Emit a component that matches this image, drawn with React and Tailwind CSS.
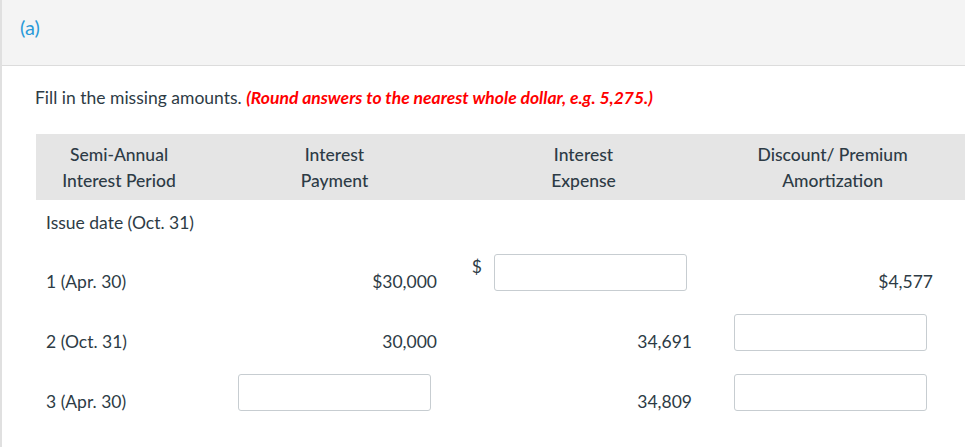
import React from "react";

const Inp = ({ cls = "" }) => (
  <div className={"h-[37px] w-[193px] rounded-[3px] border border-[#c7cdd1] bg-white " + cls} />
);

export default function App() {
  const font = { fontFamily: "Lato, 'Noto Sans', sans-serif" };
  return (
    <div className="w-[965px] h-[447px] bg-white border-l-2 border-[#e0e0e0] text-[#2d3b45]" style={font}>
      <div className="h-[66px] bg-[#f4f4f4] border-b border-[#dcdcdc] pl-[18px] pt-[13px]">
        <span className="text-[20px] font-normal text-[#2a9ad9] leading-[28px]">(a)</span>
      </div>
      <div className="pl-[33px] pt-[21px] text-[17.5px] leading-[22px]">
        Fill in the missing amounts.{" "}
        <span className="text-[#ff0000] font-bold italic">(Round answers to the nearest whole dollar, e.g. 5,275.)</span>
      </div>
      <div className="ml-[34px] mt-[25px]">
        <div className="flex bg-[#e5e5e5] h-[66px] pt-[8px] text-[17.5px] leading-[26px] font-medium text-center">
          <div className="w-[168px]">Semi-Annual<br />Interest Period</div>
          <div className="w-[268px]">Interest<br />Payment</div>
          <div className="w-[236px]">Interest<br />Expense</div>
          <div className="w-[268px]">Discount/ Premium<br />Amortization</div>
        </div>
        <div className="h-[42px] pt-[14px] pl-[10px] text-[17.5px] leading-[18px]">Issue date (Oct. 31)</div>
        {[
          { label: "1 (Apr. 30)", c2: <span>$30,000</span>, c3: <div className="flex items-start gap-[12px]"><span className="mt-[4px]">$</span><Inp cls="mr-[5px]" /></div>, c4: <span>$4,577</span> },
          { label: "2 (Oct. 31)", c2: <span>30,000</span>, c3: <span>34,691</span>, c4: <Inp cls="mr-[6px]" /> },
          { label: "3 (Apr. 30)", c2: <Inp cls="mr-[6px]" />, c3: <span>34,809</span>, c4: <Inp cls="mr-[6px]" /> },
        ].map((r, i) => (
          <div key={i} className="flex items-end h-[60px] pb-[10px] text-[17.5px] leading-[18px]">
            <div className="w-[162px] pl-[10px] pb-[1px]">{r.label}</div>
            <div className="w-[247px] flex justify-end items-end pr-[8px]"><div className="pb-[1px]">{r.c2}</div></div>
            <div className="w-[255px] flex justify-end items-end pr-[8px]"><div className="pb-[1px]">{r.c3}</div></div>
            <div className="w-[241px] flex justify-end items-end pr-[8px]"><div className="pb-[1px]">{r.c4}</div></div>
          </div>
        ))}
      </div>
    </div>
  );
}
